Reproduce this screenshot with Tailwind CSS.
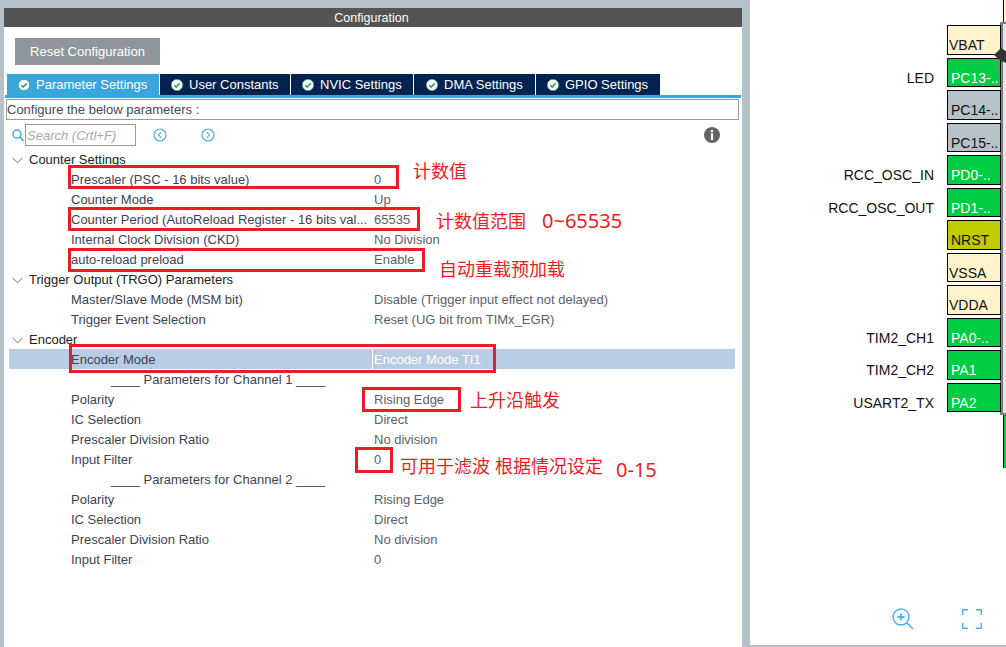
<!DOCTYPE html>
<html lang="en">
  <head>
    <meta charset="UTF-8" />
    <title>Configuration</title>
    <script src="https://cdn.jsdelivr.net/npm/@tailwindcss/browser@4"></script>
  </head>
  <body class="overflow-hidden">
    <div class="flex w-[1006px] h-[647px] bg-[#b6c2c9] font-['Liberation_Sans','Noto_Sans_CJK_SC',sans-serif] text-[13px] overflow-hidden">
      <!-- left: configuration panel -->
      <div class="relative ml-1 mt-2 w-[738px] h-[639px] bg-white shrink-0">
        <div class="h-[19px] bg-[#535453] text-white text-center text-[12.5px] leading-[20px] pr-[3px]">Configuration</div>

        <div class="pl-[11px] pt-[11px]">
          <div class="w-[145px] h-[27px] bg-[#8f979c] text-white text-center leading-[27px]">Reset Configuration</div>
        </div>

        <!-- tabs -->
        <div class="flex gap-px pl-[3px] mt-[9px] h-[21px] text-white leading-[21px]">
          <div class="w-[152px] bg-[#3aa7dc] flex items-center pl-[11px] gap-[6px]">
            <svg width="12" height="12" viewBox="0 0 12 12"><circle cx="6" cy="6" r="5.7" fill="#fff" stroke="#3f9e74" stroke-width="0.8"/><path d="M3.3 6.1 5.2 8 8.7 4.3" fill="none" stroke="#3f9e74" stroke-width="1.7"/></svg>
            <span>Parameter Settings</span>
          </div>
          <div class="w-[130px] bg-[#022350] flex items-center pl-[11px] gap-[6px]">
            <svg width="12" height="12" viewBox="0 0 12 12"><circle cx="6" cy="6" r="5.7" fill="#fff" stroke="#3f9e74" stroke-width="0.8"/><path d="M3.3 6.1 5.2 8 8.7 4.3" fill="none" stroke="#3f9e74" stroke-width="1.7"/></svg>
            <span>User Constants</span>
          </div>
          <div class="w-[122px] bg-[#022350] flex items-center pl-[11px] gap-[6px]">
            <svg width="12" height="12" viewBox="0 0 12 12"><circle cx="6" cy="6" r="5.7" fill="#fff" stroke="#3f9e74" stroke-width="0.8"/><path d="M3.3 6.1 5.2 8 8.7 4.3" fill="none" stroke="#3f9e74" stroke-width="1.7"/></svg>
            <span>NVIC Settings</span>
          </div>
          <div class="w-[121px] bg-[#022350] flex items-center pl-[12px] gap-[6px]">
            <svg width="12" height="12" viewBox="0 0 12 12"><circle cx="6" cy="6" r="5.7" fill="#fff" stroke="#3f9e74" stroke-width="0.8"/><path d="M3.3 6.1 5.2 8 8.7 4.3" fill="none" stroke="#3f9e74" stroke-width="1.7"/></svg>
            <span>DMA Settings</span>
          </div>
          <div class="w-[124px] bg-[#022350] flex items-center pl-[11px] gap-[6px]">
            <svg width="12" height="12" viewBox="0 0 12 12"><circle cx="6" cy="6" r="5.7" fill="#fff" stroke="#3f9e74" stroke-width="0.8"/><path d="M3.3 6.1 5.2 8 8.7 4.3" fill="none" stroke="#3f9e74" stroke-width="1.7"/></svg>
            <span>GPIO Settings</span>
          </div>
        </div>
        <div class="ml-px w-[736px] h-[3px] bg-[#3aa7dc]"></div>

        <div class="ml-[2px] mt-px w-[733px] h-[21px] border border-[#999] leading-[19px] text-[#444a5a]">Configure the below parameters :</div>

        <!-- search row -->
        <div class="relative flex items-center h-[22px] mt-[4px] ml-2">
          <svg width="12" height="13" viewBox="0 0 12 13" class="shrink-0"><circle cx="5" cy="5" r="4" fill="none" stroke="#3aa7dc" stroke-width="1.4"/><path d="M8 8 11.5 12" stroke="#3aa7dc" stroke-width="1.6"/></svg>
          <div class="ml-[1px] w-[111px] h-[22px] border border-[#999] pl-px leading-[21px] italic text-[#a8a8a8]">Search (Crtl+F)</div>
          <svg width="14" height="14" viewBox="0 0 14 14" class="ml-[17px]"><circle cx="7" cy="7" r="6" fill="none" stroke="#4aa8dc" stroke-width="1.1"/><path d="M8.2 4.3 5.4 7 8.2 9.7" fill="none" stroke="#4aa8dc" stroke-width="1.1"/></svg>
          <svg width="14" height="14" viewBox="0 0 14 14" class="ml-[34px]"><circle cx="7" cy="7" r="6" fill="none" stroke="#4aa8dc" stroke-width="1.1"/><path d="M5.8 4.3 8.6 7 5.8 9.7" fill="none" stroke="#4aa8dc" stroke-width="1.1"/></svg>
          <svg width="16" height="16" viewBox="0 0 16 16" class="ml-[489px]"><circle cx="8" cy="8" r="8" fill="#666"/><rect x="6.9" y="3" width="2.2" height="2.2" fill="#fff"/><rect x="6.9" y="6.3" width="2.2" height="6.6" fill="#fff"/></svg>
        </div>

        <!-- parameter tree -->
        <div class="mt-[3px] ml-[5px] w-[726px] text-[#3d4256] leading-[22px]">
          <div class="h-5 pt-[2px] flex items-center text-[#222]"><svg width="11" height="7" viewBox="0 0 11 7" class="ml-[3px] mr-[6px]"><path d="M0.5 0.8 5.5 5.8 10.5 0.8" fill="none" stroke="#777"/></svg>Counter Settings</div>
          <div class="h-5 flex"><span class="ml-[62px] w-[303px]">Prescaler (PSC - 16 bits value)</span><span class="text-[#5c5f6a]">0</span></div>
          <div class="h-5 flex"><span class="ml-[62px] w-[303px]">Counter Mode</span><span class="text-[#5c5f6a]">Up</span></div>
          <div class="h-5 flex"><span class="ml-[62px] w-[303px]">Counter Period (AutoReload Register - 16 bits val...</span><span class="text-[#5c5f6a]">65535</span></div>
          <div class="h-5 flex"><span class="ml-[62px] w-[303px]">Internal Clock Division (CKD)</span><span class="text-[#5c5f6a]">No Division</span></div>
          <div class="h-5 flex"><span class="ml-[62px] w-[303px]">auto-reload preload</span><span class="text-[#5c5f6a]">Enable</span></div>
          <div class="h-5 pt-[2px] flex items-center text-[#222]"><svg width="11" height="7" viewBox="0 0 11 7" class="ml-[3px] mr-[6px]"><path d="M0.5 0.8 5.5 5.8 10.5 0.8" fill="none" stroke="#777"/></svg>Trigger Output (TRGO) Parameters</div>
          <div class="h-5 flex"><span class="ml-[62px] w-[303px]">Master/Slave Mode (MSM bit)</span><span class="text-[#5c5f6a]">Disable (Trigger input effect not delayed)</span></div>
          <div class="h-5 flex"><span class="ml-[62px] w-[303px]">Trigger Event Selection</span><span class="text-[#5c5f6a]">Reset (UG bit from TIMx_EGR)</span></div>
          <div class="h-5 pt-[2px] flex items-center text-[#222]"><svg width="11" height="7" viewBox="0 0 11 7" class="ml-[3px] mr-[6px]"><path d="M0.5 0.8 5.5 5.8 10.5 0.8" fill="none" stroke="#777"/></svg>Encoder</div>
          <div class="h-5 flex bg-[#b8cde3]"><span class="ml-[62px] w-[302px] h-5 border-r border-white">Encoder Mode</span><span class="text-white pl-[1px]">Encoder Mode TI1</span></div>
          <div class="h-5 pl-[102px]">____ Parameters for Channel 1 ____</div>
          <div class="h-5 flex"><span class="ml-[62px] w-[303px]">Polarity</span><span class="text-[#5c5f6a]">Rising Edge</span></div>
          <div class="h-5 flex"><span class="ml-[62px] w-[303px]">IC Selection</span><span class="text-[#5c5f6a]">Direct</span></div>
          <div class="h-5 flex"><span class="ml-[62px] w-[303px]">Prescaler Division Ratio</span><span class="text-[#5c5f6a]">No division</span></div>
          <div class="h-5 flex"><span class="ml-[62px] w-[303px]">Input Filter</span><span class="text-[#5c5f6a]">0</span></div>
          <div class="h-5 pl-[102px]">____ Parameters for Channel 2 ____</div>
          <div class="h-5 flex"><span class="ml-[62px] w-[303px]">Polarity</span><span class="text-[#5c5f6a]">Rising Edge</span></div>
          <div class="h-5 flex"><span class="ml-[62px] w-[303px]">IC Selection</span><span class="text-[#5c5f6a]">Direct</span></div>
          <div class="h-5 flex"><span class="ml-[62px] w-[303px]">Prescaler Division Ratio</span><span class="text-[#5c5f6a]">No division</span></div>
          <div class="h-5 flex"><span class="ml-[62px] w-[303px]">Input Filter</span><span class="text-[#5c5f6a]">0</span></div>
        </div>

        <!-- red annotations drawn over the screenshot -->
        <div class="absolute left-[64px] top-[157px] w-[331px] h-[24px] border-[3px] border-[#ed1c24]"></div>
        <div class="absolute left-[64px] top-[199px] w-[352px] h-[24px] border-[3px] border-[#ed1c24]"></div>
        <div class="absolute left-[64px] top-[240px] w-[357px] h-[24px] border-[3px] border-[#ed1c24]"></div>
        <div class="absolute left-[65px] top-[336px] w-[427px] h-[29px] border-[3px] border-[#ed1c24]"></div>
        <div class="absolute left-[358px] top-[379px] w-[99px] h-[25px] border-[3px] border-[#ed1c24]"></div>
        <div class="absolute left-[351px] top-[439px] w-[38px] h-[26px] border-[3px] border-[#ed1c24]"></div>
        <div class="absolute left-[409px] top-[152px] text-[18px] leading-[24px] text-[#ed1c24]">计数值</div>
        <div class="absolute left-[432px] top-[202px] text-[18px] leading-[24px] text-[#ed1c24]">计数值范围</div>
        <div class="absolute left-[538px] top-[201px] font-['Noto_Sans',sans-serif] text-[20px] leading-[24px] text-[#ed1c24]">0~65535</div>
        <div class="absolute left-[435px] top-[250px] text-[18px] leading-[24px] text-[#ed1c24]">自动重载预加载</div>
        <div class="absolute left-[466px] top-[381px] text-[18px] leading-[24px] text-[#ed1c24]">上升沿触发</div>
        <div class="absolute left-[396px] top-[447px] text-[18px] leading-[24px] text-[#ed1c24]">可用于滤波 根据情况设定</div>
        <div class="absolute left-[612px] top-[450px] font-['Noto_Sans',sans-serif] text-[20px] leading-[24px] text-[#ed1c24]">0-15</div>
      </div>

      <!-- right: chip view -->
      <div class="relative ml-2 w-[256px] h-[645px] bg-white shrink-0 overflow-hidden text-[14px]">
        <div class="absolute left-[253px] top-0 w-[3px] h-[22px] bg-[#fff4cc] border-l border-black"></div>
        <div class="absolute left-[250px] top-[22px] w-[6px] h-[393px] bg-[#e4e6e8] border-l-[3px] border-y-[2px] border-[#7b7f82]"></div>
        <div class="absolute left-[253px] top-[415px] w-[3px] h-[53px] bg-[#00cc44] border-l border-black"></div>

        <div class="relative pt-[25px] flex flex-col gap-[3px] text-[#111] leading-4">
          <div class="flex h-[30px]"><span class="w-[184px] mr-[13px] text-right"></span><span class="w-[54px] border border-black bg-[#fff4cc] pl-px pt-[11px]">VBAT</span></div>
          <div class="flex h-[29px]"><span class="w-[184px] mr-[13px] text-right pt-[12px]">LED</span><span class="w-[54px] border border-black bg-[#00cc44] text-white pl-[3px] pt-[11px] whitespace-nowrap overflow-hidden">PC13-..</span></div>
          <div class="flex h-[30px]"><span class="w-[184px] mr-[13px] text-right"></span><span class="w-[54px] border border-black bg-[#b6c2c9] pl-[3px] pt-[11px] whitespace-nowrap overflow-hidden">PC14-..</span></div>
          <div class="flex h-[29px]"><span class="w-[184px] mr-[13px] text-right"></span><span class="w-[54px] border border-black bg-[#b6c2c9] pl-[3px] pt-[11px] whitespace-nowrap overflow-hidden">PC15-..</span></div>
          <div class="flex h-[30px]"><span class="w-[184px] mr-[13px] text-right pt-[12px]">RCC_OSC_IN</span><span class="w-[54px] border border-black bg-[#00cc44] text-white pl-[3px] pt-[11px]">PD0-..</span></div>
          <div class="flex h-[29px]"><span class="w-[184px] mr-[13px] text-right pt-[12px]">RCC_OSC_OUT</span><span class="w-[54px] border border-black bg-[#00cc44] text-white pl-[3px] pt-[11px]">PD1-..</span></div>
          <div class="flex h-[30px]"><span class="w-[184px] mr-[13px] text-right"></span><span class="w-[54px] border border-black bg-[#c0cc00] pl-[3px] pt-[11px]">NRST</span></div>
          <div class="flex h-[29px]"><span class="w-[184px] mr-[13px] text-right"></span><span class="w-[54px] border border-black bg-[#fff4cc] pl-px pt-[11px]">VSSA</span></div>
          <div class="flex h-[30px]"><span class="w-[184px] mr-[13px] text-right"></span><span class="w-[54px] border border-black bg-[#fff4cc] pl-px pt-[11px]">VDDA</span></div>
          <div class="flex h-[29px]"><span class="w-[184px] mr-[13px] text-right pt-[12px]">TIM2_CH1</span><span class="w-[54px] border border-black bg-[#00cc44] text-white pl-[3px] pt-[11px]">PA0-..</span></div>
          <div class="flex h-[30px]"><span class="w-[184px] mr-[13px] text-right pt-[12px]">TIM2_CH2</span><span class="w-[54px] border border-black bg-[#00cc44] text-white pl-[3px] pt-[11px]">PA1</span></div>
          <div class="flex h-[29px]"><span class="w-[184px] mr-[13px] text-right pt-[12px]">USART2_TX</span><span class="w-[54px] border border-black bg-[#00cc44] text-white pl-[3px] pt-[11px]">PA2</span></div>
        </div>

        <!-- pushpin on the first green pin -->
        <svg width="14" height="26" viewBox="0 0 14 26" class="absolute left-[243px] top-[46px]">
          <path d="M2 25 7 13" stroke="#888" stroke-width="1.4"/>
          <path d="M1 9 L8 2 L14 6 L14 17 L8 15 Z" fill="#333"/>
        </svg>

        <!-- zoom and fit icons -->
        <svg width="22" height="22" viewBox="0 0 22 22" class="absolute left-[142px] top-[608px]" fill="none" stroke="#4ab2e6">
          <circle cx="9" cy="9" r="8" stroke-width="1.4"/>
          <path d="M14.8 14.8 21 21" stroke-width="1.6"/>
          <path d="M5.5 9H12.5M9 5.5V12.5" stroke-width="1.8"/>
        </svg>
        <svg width="20" height="20" viewBox="0 0 20 20" class="absolute left-[212px] top-[609px]" fill="none" stroke="#4ab2e6" stroke-width="1.4">
          <path d="M0.7 6V0.7H6M14 0.7H19.3V6M19.3 14V19.3H14M6 19.3H0.7V14"/>
        </svg>
      </div>
    </div>
  </body>
</html>
